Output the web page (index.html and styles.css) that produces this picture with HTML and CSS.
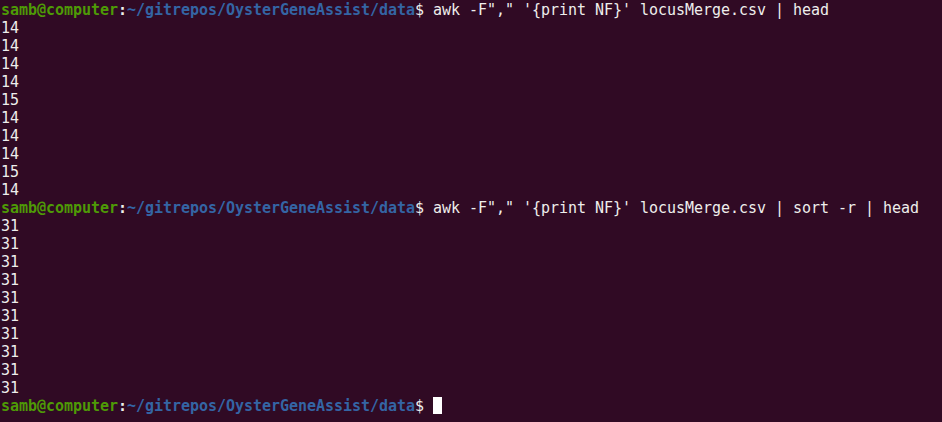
FILE: index.html
```html
<!DOCTYPE html>
<html>
<head>
<meta charset="utf-8">
<link rel="stylesheet" href="styles.css">
</head>
<body>
<div class="term">
<div class="line"><span class="user">samb@computer</span><span class="colon">:</span><span class="path">~/gitrepos/OysterGeneAssist/data</span>$ awk -F"," '{print NF}' locusMerge.csv | head</div>
<div class="line">14</div>
<div class="line">14</div>
<div class="line">14</div>
<div class="line">14</div>
<div class="line">15</div>
<div class="line">14</div>
<div class="line">14</div>
<div class="line">14</div>
<div class="line">15</div>
<div class="line">14</div>
<div class="line"><span class="user">samb@computer</span><span class="colon">:</span><span class="path">~/gitrepos/OysterGeneAssist/data</span>$ awk -F"," '{print NF}' locusMerge.csv | sort -r | head</div>
<div class="line">31</div>
<div class="line">31</div>
<div class="line">31</div>
<div class="line">31</div>
<div class="line">31</div>
<div class="line">31</div>
<div class="line">31</div>
<div class="line">31</div>
<div class="line">31</div>
<div class="line">31</div>
<div class="line"><span class="user">samb@computer</span><span class="colon">:</span><span class="path">~/gitrepos/OysterGeneAssist/data</span>$ <span class="cursor"></span></div>
</div>
</body>
</html>
```

FILE: styles.css
```css
html, body {
  margin: 0;
  padding: 0;
  background: #300a24;
  width: 942px;
  height: 422px;
  overflow: hidden;
}

.term {
  padding: 1px 0 0 1px;
  font-family: "DejaVu Sans Mono", "Liberation Mono", monospace;
  font-size: 15px;
  letter-spacing: -0.03px;
  color: #eeeeec;
}

.line {
  height: 18px;
  line-height: 18px;
  white-space: pre;
}

.user {
  color: #4e9a06;
  font-weight: bold;
}

.colon {
  color: #eeeeec;
  font-weight: bold;
}

.path {
  color: #3465a4;
  font-weight: bold;
}

.cursor {
  display: inline-block;
  width: 9px;
  height: 17px;
  background: #ffffff;
  vertical-align: top;
}
```
